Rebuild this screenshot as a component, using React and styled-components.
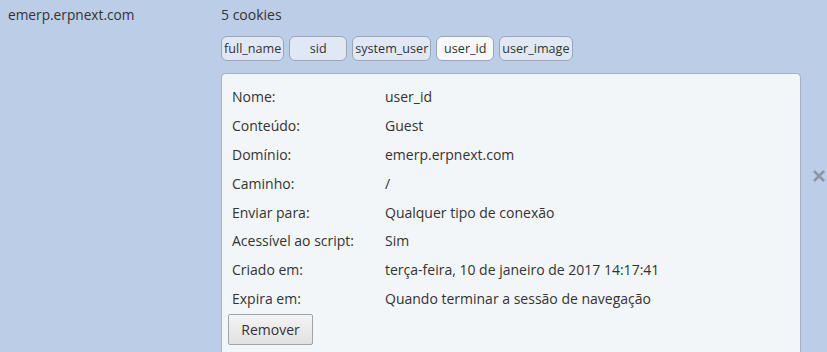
import React from "react";
import styled, { createGlobalStyle } from "styled-components";

const GlobalStyle = createGlobalStyle`
  html, body {
    margin: 0;
    padding: 0;
    background: #bccde8;
  }
  body {
    font-family: "Open Sans", "Noto Sans", sans-serif;
    font-size: 14px;
    color: #333;
  }
`;

const Page = styled.div`
  width: 827px;
  height: 352px;
  overflow: hidden;
  display: grid;
  grid-template-columns: 221px 580px 26px;
  background: #bccde8;
`;

const Site = styled.div`
  padding: 5px 0 0 8px;
  line-height: 20px;
  font-size: 13.7px;
`;

const Main = styled.div`
  padding-top: 5px;
`;

const Count = styled.div`
  line-height: 20px;
  margin-bottom: 11px;
`;

const Chips = styled.div`
  display: flex;
  gap: 5px;
  margin-bottom: 12px;
`;

const Chip = styled.button`
  font: inherit;
  font-size: 12.6px;
  color: #333;
  height: 25px;
  min-width: ${(p) => p.$minWidth || 0}px;
  padding: 0 2px;
  border: 1px solid #9ba5b7;
  border-radius: 6px;
  background: ${(p) => (p.$active ? "#f6f8fa" : "#e1e8f5")};
  cursor: pointer;
`;

const Panel = styled.div`
  background: #f3f6f8;
  border: 1px solid #a7b1c0;
  border-radius: 5px 5px 0 0;
  border-bottom: none;
  padding: 13px 9px 0 9px;
  height: 300px;
  box-sizing: border-box;
`;

const Row = styled.div`
  display: grid;
  grid-template-columns: 153px 1fr;
  line-height: 20px;
  padding: 0 0 8.9px 1px;
`;

const Remove = styled.button`
  font: inherit;
  color: #333;
  margin: -4px 0 0 -3px;
  width: 85px;
  height: 31px;
  border: 1px solid #a3a3a3;
  border-radius: 2px;
  background: linear-gradient(#f4f4f4, #e1e1e1);
  cursor: pointer;
`;

const Close = styled.div`
  padding: 168px 0 0 11px;
`;

const cookies = [
  { name: "full_name" },
  { name: "sid", minWidth: 58 },
  { name: "system_user" },
  { name: "user_id", active: true, minWidth: 58 },
  { name: "user_image" },
];

const fields = [
  ["Nome:", "user_id"],
  ["Conteúdo:", "Guest"],
  ["Domínio:", "emerp.erpnext.com"],
  ["Caminho:", "/"],
  ["Enviar para:", "Qualquer tipo de conexão"],
  ["Acessível ao script:", "Sim"],
  ["Criado em:", "terça-feira, 10 de janeiro de 2017 14:17:41"],
  ["Expira em:", "Quando terminar a sessão de navegação"],
];

const App = () => (
  <>
    <GlobalStyle />
    <Page>
      <Site>emerp.erpnext.com</Site>
      <Main>
        <Count>5 cookies</Count>
        <Chips>
          {cookies.map((c) => (
            <Chip key={c.name} $active={c.active} $minWidth={c.minWidth}>
              {c.name}
            </Chip>
          ))}
        </Chips>
        <Panel>
          {fields.map(([label, value]) => (
            <Row key={label}>
              <span>{label}</span>
              <span>{value}</span>
            </Row>
          ))}
          <Remove>Remover</Remove>
        </Panel>
      </Main>
      <Close>
        <svg width="14" height="14" viewBox="0 0 14 14">
          <path
            d="M2 2 L12 12 M12 2 L2 12"
            stroke="#8b95a5"
            strokeWidth="2.6"
          />
        </svg>
      </Close>
    </Page>
  </>
);

export default App;
